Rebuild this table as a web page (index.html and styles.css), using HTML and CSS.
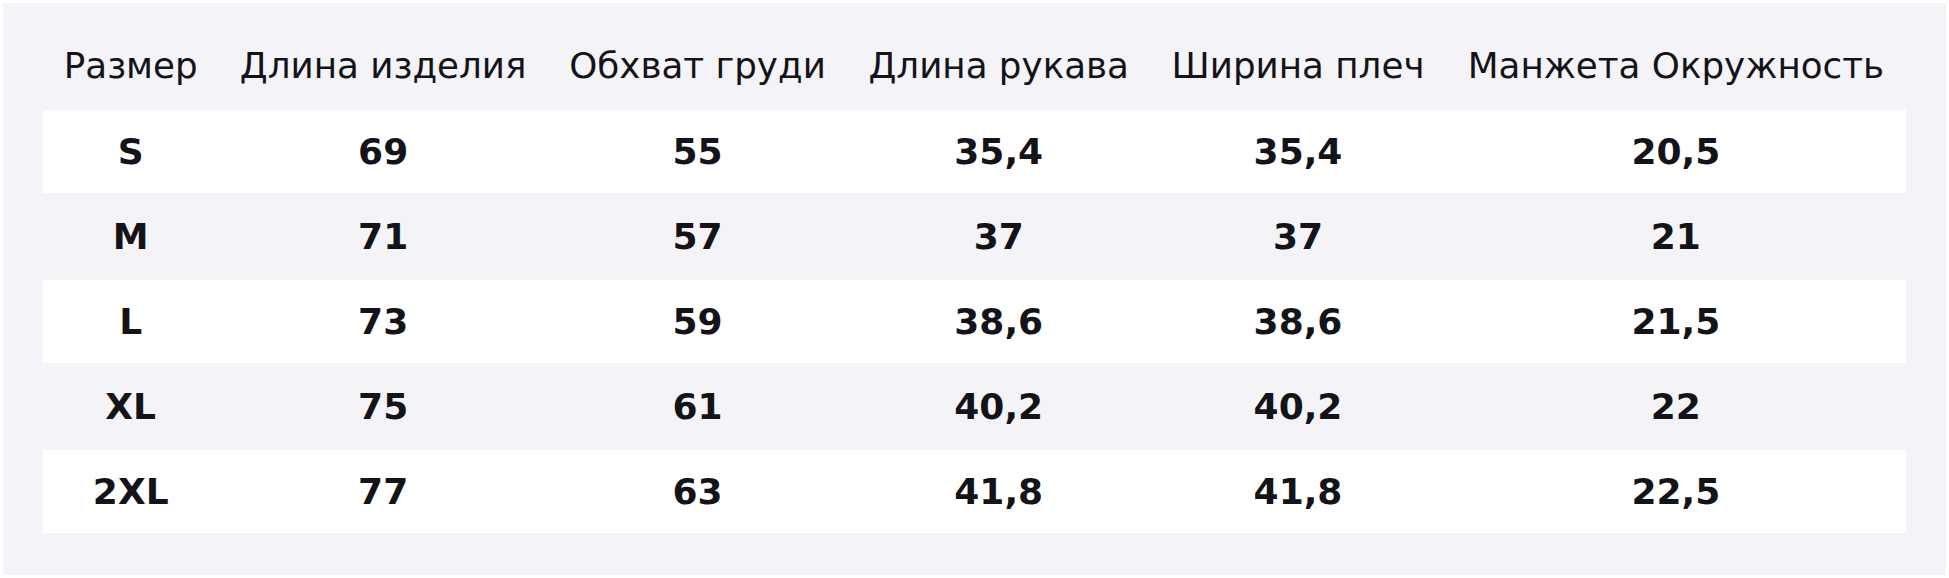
FILE: index.html
```html
<!DOCTYPE html>
<html lang="ru">
<head>
<meta charset="utf-8">
<title>Таблица размеров</title>
<link rel="stylesheet" href="styles.css">
</head>
<body>
<div class="sheet">
  <table class="sizes">
    <thead>
      <tr>
        <th>Размер</th>
        <th>Длина изделия</th>
        <th>Обхват груди</th>
        <th>Длина рукава</th>
        <th>Ширина плеч</th>
        <th>Манжета Окружность</th>
      </tr>
    </thead>
    <tbody>
      <tr class="light"><td>S</td><td>69</td><td>55</td><td>35,4</td><td>35,4</td><td>20,5</td></tr>
      <tr class="shade"><td>M</td><td>71</td><td>57</td><td>37</td><td>37</td><td>21</td></tr>
      <tr class="light"><td>L</td><td>73</td><td>59</td><td>38,6</td><td>38,6</td><td>21,5</td></tr>
      <tr class="shade"><td>XL</td><td>75</td><td>61</td><td>40,2</td><td>40,2</td><td>22</td></tr>
      <tr class="light"><td>2XL</td><td>77</td><td>63</td><td>41,8</td><td>41,8</td><td>22,5</td></tr>
    </tbody>
  </table>
</div>
</body>
</html>
```

FILE: styles.css
```css
html, body {
  margin: 0;
  padding: 0;
  background: #ffffff;
}
body {
  padding: 3px;
  font-family: "DejaVu Sans", "Liberation Sans", sans-serif;
  color: #131318;
}
.sheet {
  box-sizing: border-box;
  width: 1943px;
  height: 572px;
  background: #f4f4f8;
  padding: 40px 40px 42px 40px;
}
.sizes {
  width: 100%;
  border-collapse: collapse;
  border-spacing: 0;
}
.sizes th {
  font-weight: normal;
  font-size: 35.7px;
  line-height: 42px;
  height: 67px;
  padding: 2px 20px 23px;
  box-sizing: border-box;
  vertical-align: top;
  white-space: nowrap;
  text-align: center;
}
.sizes td {
  font-weight: bold;
  font-size: 36px;
  line-height: 42px;
  padding: 0 20px;
  text-align: center;
  vertical-align: middle;
  white-space: nowrap;
}
.light td {
  background: #ffffff;
  height: 83px;
}
.shade td {
  background: transparent;
  height: 87px;
}
```
